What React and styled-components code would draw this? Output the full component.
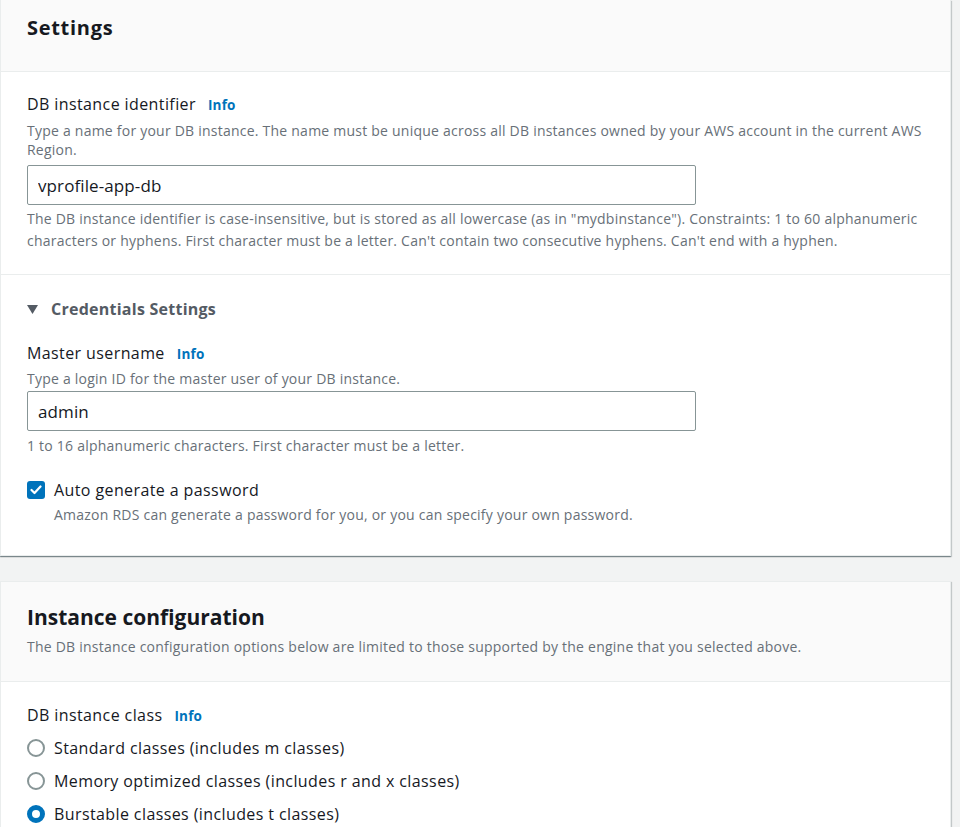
import React from "react";
import styled, { createGlobalStyle } from "styled-components";

const GlobalStyle = createGlobalStyle`
  html, body {
    margin: 0;
    padding: 0;
    background: #f2f3f3;
    font-family: "Open Sans", "Noto Sans", "Liberation Sans", sans-serif;
    color: #16191f;
  }
`;

const Page = styled.div`
  width: 960px;
  display: flex;
  flex-direction: column;
  gap: 25px;
  padding-bottom: 40px;
`;

const Card = styled.section`
  width: 951px;
  box-sizing: border-box;
  background: #fff;
  border: 1px solid #eaeded;
  border-top: ${(p) => (p.cut ? "none" : "1px solid #eaeded")};
  box-shadow: 0 1px 1px 0 rgba(0, 28, 36, 0.3), 1px 1px 1px 0 rgba(0, 28, 36, 0.15),
    -1px 1px 1px 0 rgba(0, 28, 36, 0.15);
`;

const Header = styled.div`
  background: #fafafa;
  border-bottom: 1px solid #eaeded;
  padding: ${(p) => p.pad};
`;

const Title = styled.h2`
  margin: 0;
  font-size: ${(p) => p.size}px;
  line-height: ${(p) => p.lh}px;
  letter-spacing: ${(p) => p.ls || 0}px;
  font-weight: 700;
  color: #16191f;
`;

const Body = styled.div`
  padding: ${(p) => p.pad};
  border-bottom: ${(p) => (p.divider ? "1px solid #eaeded" : "none")};
`;

const Label = styled.div`
  display: flex;
  align-items: baseline;
  gap: 12px;
  font-size: 16px;
  line-height: 22px;
  letter-spacing: 0.4px;
  color: #16191f;
  margin-top: ${(p) => p.mt || 0}px;
`;

const Info = styled.a`
  color: #0073bb;
  font-size: 13.5px;
  letter-spacing: 0.2px;
  font-weight: 700;
  text-decoration: none;
`;

const Desc = styled.div`
  font-size: 14px;
  letter-spacing: 0.23px;
  line-height: ${(p) => p.lh || 19}px;
  color: #687078;
  margin-top: ${(p) => p.mt || 0}px;
`;

const Input = styled.input`
  display: block;
  box-sizing: border-box;
  width: 669px;
  height: 40px;
  margin-top: ${(p) => p.mt || 0}px;
  padding: 0 10px;
  border: 1px solid #879596;
  border-radius: 2px;
  font-family: inherit;
  font-size: 17px;
  letter-spacing: 0.1px;
  color: #16191f;
  background: #fff;
  outline: none;
`;

const Expander = styled.div`
  display: flex;
  align-items: center;
  gap: 13px;
  font-size: 16px;
  line-height: 22px;
  letter-spacing: 0.25px;
  font-weight: 700;
  color: #545b64;
`;

const CheckRow = styled.div`
  display: flex;
  gap: 9px;
  margin-top: 22px;
`;

const CheckBox = styled.span`
  width: 18px;
  height: 18px;
  margin-top: 2px;
  border-radius: 3px;
  background: #0073bb;
  display: flex;
  align-items: center;
  justify-content: center;
  flex-shrink: 0;
`;

const CheckText = styled.div`
  display: flex;
  flex-direction: column;
  gap: 4px;
`;

const RadioList = styled.div`
  display: flex;
  flex-direction: column;
  gap: 11px;
  margin-top: 10px;
`;

const RadioRow = styled.label`
  display: flex;
  align-items: center;
  gap: 9px;
  font-size: 16px;
  line-height: 22px;
  letter-spacing: 0.4px;
  color: #16191f;
`;

const Radio = styled.span`
  width: 18px;
  height: 18px;
  box-sizing: border-box;
  border-radius: 50%;
  border: ${(p) => (p.checked ? "5px solid #0073bb" : "2px solid #879596")};
  background: #fff;
  flex-shrink: 0;
`;

const App = () => {
  return (
    <>
      <GlobalStyle />
      <Page>
        <Card cut>
          <Header pad="14px 26px 29px">
            <Title size={20} lh={28} ls={0.7}>
              Settings
            </Title>
          </Header>
          <Body pad="21px 26px 22px" divider>
            <Label>
              DB instance identifier <Info>Info</Info>
            </Label>
            <Desc mt={5}>
              Type a name for your DB instance. The name must be unique across all DB instances owned by your AWS account in the current AWS
              <br />
              Region.
            </Desc>
            <Input mt={6} defaultValue="vprofile-app-db" />
            <Desc mt={3} lh={22}>
              The DB instance identifier is case-insensitive, but is stored as all lowercase (as in "mydbinstance"). Constraints: 1 to 60 alphanumeric
              <br />
              characters or hyphens. First character must be a letter. Can't contain two consecutive hyphens. Can't end with a hyphen.
            </Desc>
          </Body>
          <Body pad="23px 26px 31px">
            <Expander>
              <svg width="11" height="9" viewBox="0 0 11 9">
                <path d="M0 0 H11 L5.5 9 Z" fill="#545b64" />
              </svg>
              Credentials Settings
            </Expander>
            <Label mt={22}>
              Master username <Info>Info</Info>
            </Label>
            <Desc mt={4}>Type a login ID for the master user of your DB instance.</Desc>
            <Input mt={3} defaultValue="admin" />
            <Desc mt={4} lh={22}>
              1 to 16 alphanumeric characters. First character must be a letter.
            </Desc>
            <CheckRow>
              <CheckBox>
                <svg width="12" height="10" viewBox="0 0 12 10">
                  <path d="M1.5 5 L4.5 8 L10.5 1.5" fill="none" stroke="#fff" strokeWidth="2.2" strokeLinecap="round" strokeLinejoin="round" />
                </svg>
              </CheckBox>
              <CheckText>
                <Label>Auto generate a password</Label>
                <Desc>Amazon RDS can generate a password for you, or you can specify your own password.</Desc>
              </CheckText>
            </CheckRow>
          </Body>
        </Card>
        <Card>
          <Header pad="20px 26px 25px">
            <Title size={21} lh={30}>
              Instance configuration
            </Title>
            <Desc mt={5}>The DB instance configuration options below are limited to those supported by the engine that you selected above.</Desc>
          </Header>
          <Body pad="22px 26px 30px">
            <Label>
              DB instance class <Info>Info</Info>
            </Label>
            <RadioList>
              <RadioRow>
                <Radio />
                Standard classes (includes m classes)
              </RadioRow>
              <RadioRow>
                <Radio />
                Memory optimized classes (includes r and x classes)
              </RadioRow>
              <RadioRow>
                <Radio checked />
                Burstable classes (includes t classes)
              </RadioRow>
            </RadioList>
          </Body>
        </Card>
      </Page>
    </>
  );
};

export default App;
